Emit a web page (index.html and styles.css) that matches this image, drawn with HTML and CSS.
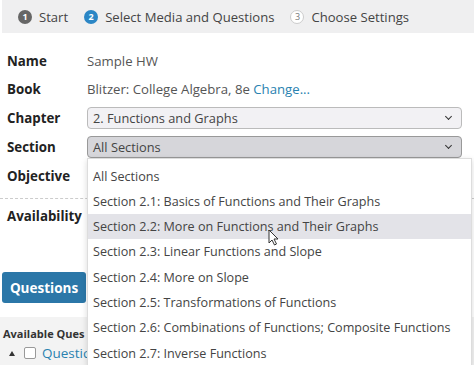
FILE: index.html
```html
<!DOCTYPE html>
<html lang="en">
  <head>
    <meta charset="UTF-8" />
    <title>Assignment - Select Media and Questions</title>
    <link rel="stylesheet" href="styles.css">
  </head>
  <body>
    <div class="steps">
      <div class="step done"><span class="num">1</span>Start</div>
      <div class="step current"><span class="num">2</span>Select Media and Questions</div>
      <div class="step todo"><span class="num">3</span>Choose Settings</div>
    </div>

    <div class="form">
      <div class="row r-name">
        <div class="label">Name</div>
        <div class="value">Sample HW</div>
      </div>
      <div class="row r-book">
        <div class="label">Book</div>
        <div class="value">Blitzer: College Algebra, 8e <a class="link" href="#">Change...</a></div>
      </div>
      <div class="row r-chapter">
        <div class="label">Chapter</div>
        <div class="select">2. Functions and Graphs<span class="chev"></span></div>
      </div>
      <div class="row r-section">
        <div class="label">Section</div>
        <div class="select open">All Sections<span class="chev"></span>
          <!-- open dropdown list -->
          <ul class="options">
            <li>All Sections</li>
            <li>Section 2.1: Basics of Functions and Their Graphs</li>
            <li class="hover">Section 2.2: More on Functions and Their Graphs</li>
            <li>Section 2.3: Linear Functions and Slope</li>
            <li>Section 2.4: More on Slope</li>
            <li>Section 2.5: Transformations of Functions</li>
            <li>Section 2.6: Combinations of Functions; Composite Functions</li>
            <li>Section 2.7: Inverse Functions</li>
          </ul>
          <svg class="cursor" width="11" height="17" viewBox="0 0 11 17">
            <path d="M1 1 L1 14 L4 11 L6.5 16 L8.5 15 L6 10 L10 10 Z" fill="#fff" stroke="#333" stroke-width="1" stroke-linejoin="round"/>
          </svg>
        </div>
      </div>
      <div class="row r-objective">
        <div class="label">Objective</div>
      </div>
      <div class="divider"></div>
      <div class="row r-avail">
        <div class="label">Availability</div>
      </div>

      <button class="btn-questions">Questions</button>
    </div>

    <div class="available">
      <div class="avail-title">Available Ques</div>
      <div class="q-row">
        <span class="tri"></span>
        <span class="check"></span>
        <a class="link q-link" href="#">Questic</a>
      </div>
    </div>
  </body>
</html>
```

FILE: styles.css
```css
* {
  margin: 0;
  padding: 0;
  box-sizing: border-box;
}

body {
  font-family: "Open Sans", Arial, sans-serif;
  background-color: #fff;
  color: #333;
  width: 474px;
  height: 365px;
  overflow: hidden;
}

.steps {
  height: 33px;
  margin-left: 2px;
  background-color: #efeff0;
  display: flex;
  align-items: center;
  padding-left: 16px;
  gap: 16px;
  font-size: 13.1px;
  color: #444;
}

.step {
  display: flex;
  align-items: center;
  gap: 7px;
}

.num {
  width: 14px;
  height: 14px;
  border-radius: 50%;
  display: flex;
  align-items: center;
  justify-content: center;
  font-size: 9px;
  font-weight: bold;
  color: #fff;
}

.done .num {
  background: #666;
}

.current .num {
  background: #2b86c5;
}

.todo .num {
  background: #fff;
  border: 1px solid #ccc;
  color: #777;
  font-weight: normal;
}

.form {
  padding-top: 14px;
}

.row {
  display: grid;
  grid-template-columns: 87px 1fr;
  align-items: center;
  height: 28px;
}

.r-chapter,
.r-section {
  height: 29px;
}

.r-objective {
  height: 30px;
}

.label {
  padding-left: 7px;
  font-weight: bold;
  font-size: 13.3px;
  color: #222;
}

.value {
  font-size: 13.2px;
  color: #555;
}

.link {
  color: #2a82b0;
  text-decoration: none;
}

.select {
  position: relative;
  height: 22px;
  margin-right: 12px;
  border: 1px solid #bbb;
  border-radius: 4px;
  background: #f2f1f4;
  font-size: 12.8px;
  color: #444;
  padding-left: 5px;
  line-height: 20px;
}

.select.open {
  background: #d6d6da;
  border-color: #999;
}

.chev {
  position: absolute;
  right: 10px;
  top: 6px;
  width: 5px;
  height: 5px;
  border-right: 1.8px solid #333;
  border-bottom: 1.8px solid #333;
  transform: rotate(45deg);
}

.options {
  position: absolute;
  top: 21px;
  left: -1px;
  width: 385px;
  height: 208px;
  list-style: none;
  background: #fff;
  border: 1px solid #ddd;
  border-bottom: none;
  box-shadow: 0 2px 6px rgba(0, 0, 0, 0.15);
  padding-top: 5px;
  overflow: hidden;
  z-index: 5;
}

.options li {
  height: 25.3px;
  line-height: 25.3px;
  padding-left: 5px;
  font-size: 12.6px;
  color: #444;
  white-space: nowrap;
}

.options li.hover {
  background: #e3e3e8;
}

.cursor {
  position: absolute;
  left: 180px;
  top: 92px;
  z-index: 6;
}

.divider {
  margin-top: 7px;
  border-top: 1px dashed #ccc;
}

.r-avail {
  height: 34px;
}

.btn-questions {
  margin-top: 39px;
  margin-left: 2px;
  width: 84px;
  height: 31px;
  border: none;
  border-radius: 3px;
  background-color: #2b77a8;
  color: #fff;
  font-family: "Open Sans", Arial, sans-serif;
  font-weight: bold;
  font-size: 13.5px;
}

.available {
  margin-top: 14px;
  background: #f3f3f3;
  height: 48px;
  padding: 9px 3px 0;
}

.avail-title {
  font-size: 11px;
  font-weight: bold;
  color: #333;
}

.q-row {
  display: flex;
  align-items: center;
  gap: 6px;
  margin-top: 3px;
  padding-left: 6px;
}

.tri {
  width: 0;
  height: 0;
  border-left: 3px solid transparent;
  border-right: 3px solid transparent;
  border-bottom: 5px solid #333;
  margin-right: 3px;
}

.check {
  width: 12px;
  height: 12px;
  border: 1px solid #999;
  background: #fff;
  border-radius: 2px;
}

.q-link {
  font-size: 13.5px;
}
```
